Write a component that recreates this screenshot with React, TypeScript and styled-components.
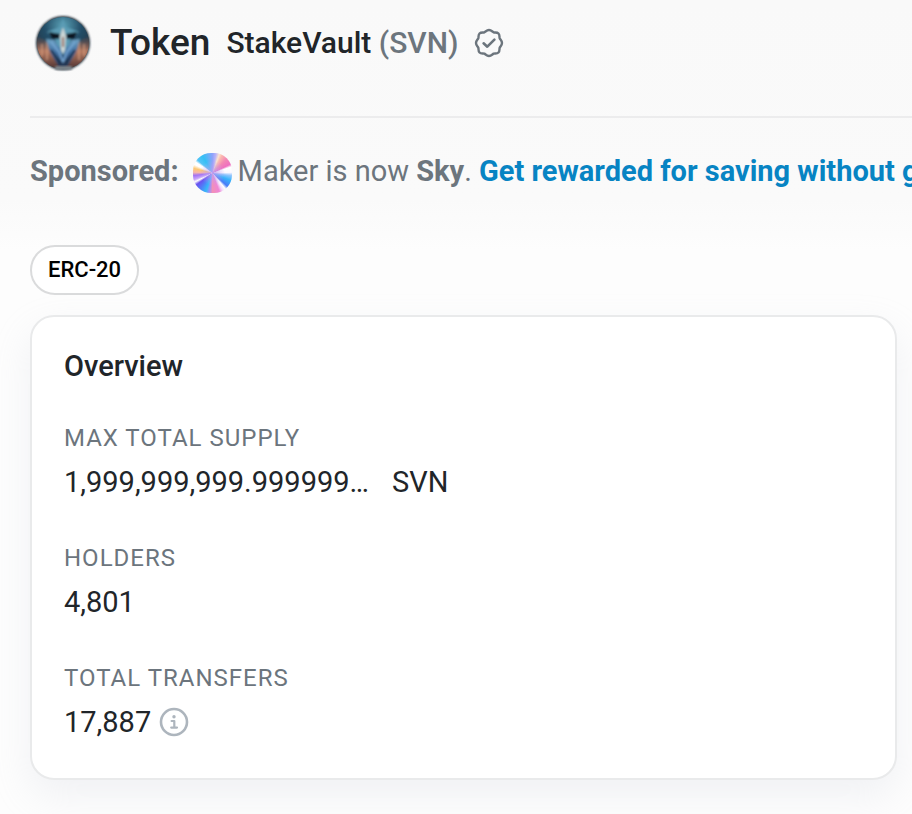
import React from 'react';
import styled, { createGlobalStyle } from 'styled-components';

const Global = createGlobalStyle`
  *, *::before, *::after { box-sizing: border-box; }
  body {
    margin: 0;
    overflow-x: hidden;
    background: #fdfdfd linear-gradient(#f9f9f9, #fafafa 200px, #fdfdfd 250px) no-repeat;
    color: #212529;
    font-family: Roboto, sans-serif;
    font-size: 29px;
    line-height: 44px;
  }
`;

const Page = styled.main`
  padding: 0 15px 34px 30px;
`;

const Header = styled.header`
  display: flex;
  align-items: center;
  height: 118px;
  padding: 0 0 30px 4px;
  margin-right: -15px;
  border-bottom: 2px solid #ececed;
  white-space: nowrap;
`;

const Title = styled.h1`
  display: flex;
  align-items: center;
  gap: 16px;
  margin: 0 16px 0 18px;
  font-size: 37px;
  font-weight: 500;
  line-height: 44px;
`;

const TokenName = styled.span`
  font-size: 30px;
`;

const Muted = styled.span`
  color: #6c757d;
`;

const Sponsored = styled.p`
  display: flex;
  align-items: center;
  margin: 31px -15px 0 0;
  overflow: hidden;
  color: #6c757d;
  white-space: pre;
`;

const SkyMark = styled.span`
  flex: none;
  width: 39px;
  height: 40px;
  margin: 4px 6px 0 14px;
  border-radius: 18px;
  background:
    radial-gradient(circle, rgba(190, 160, 240, 0.9) 0, rgba(190, 160, 240, 0) 45%),
    conic-gradient(
      #8fa4fb 0deg, #b9b2f8 10deg, #fbe3cf 20deg, #fbb9b0 28deg, #f386b4 45deg, #ef6fc0 64deg,
      #ffffff 72deg, #fbf7ff 88deg, #8fc4fd 98deg, #38b4fb 112deg, #4a7bf8 132deg,
      #ffffff 141deg, #f3dcfa 150deg, #ef86d4 160deg, #f291b8 180deg,
      #9b90fa 190deg, #36b8f8 200deg, #4b86f8 215deg, #6a51f0 234deg,
      #ffffff 243deg, #c9a6fa 250deg, #a373f5 262deg,
      #f7b7a8 272deg, #fcc873 284deg, #ffffff 295deg, #ffffff 303deg,
      #54c4f6 311deg, #34c0f5 330deg, #8fa4fb 360deg
    );
`;

const SponsorLink = styled.a`
  color: #0784c3;
  font-weight: 700;
  text-decoration: none;
`;

const Tag = styled.button`
  display: block;
  height: 50px;
  margin: 52px 0 20px;
  padding: 0 16px;
  border: 2px solid #dadbdc;
  border-radius: 25px;
  background: #fff;
  color: #000;
  font: 500 22px/44px Roboto, sans-serif;
`;

const Card = styled.section`
  padding: 28px 32px 34px;
  border: 2px solid #e9eaeb;
  border-radius: 24px;
  background: #fff;
  box-shadow: 0 16px 38px rgba(189, 197, 209, 0.2);
`;

const CardTitle = styled.h2`
  margin: 0 0 33px;
  font-size: 29px;
  font-weight: 500;
  line-height: 42px;
`;

const Stats = styled.dl`
  display: grid;
  gap: 36px;
  margin: 0;
`;

const Label = styled.dt`
  color: #6c757d;
  font-size: 24px;
  letter-spacing: 1px;
  line-height: 36px;
  text-transform: uppercase;
`;

const Value = styled.dd`
  display: flex;
  align-items: center;
  margin: 4px 0 0;
`;

const Unit = styled.span`
  margin-left: 23px;
`;

const InfoButton = styled.button`
  display: flex;
  margin: 0 0 0 8px;
  padding: 0;
  border: 0;
  background: none;
  color: #adb5bd;
`;

function TokenLogo() {
  return (
    <svg width="58" height="58" viewBox="0 0 58 58" role="img" aria-label="StakeVault">
      <defs>
        <radialGradient id="sky" cx="0.5" cy="0.2" r="0.75">
          <stop offset="0" stopColor="#5ba3b8" />
          <stop offset="0.4" stopColor="#25506a" />
          <stop offset="1" stopColor="#14222f" />
        </radialGradient>
        <linearGradient id="ember" x1="0" y1="0" x2="0" y2="1">
          <stop offset="0" stopColor="#6e4b45" stopOpacity="0" />
          <stop offset="0.45" stopColor="#b5785f" />
          <stop offset="1" stopColor="#3a2529" />
        </linearGradient>
        <linearGradient id="wing" x1="0" y1="0" x2="0" y2="1">
          <stop offset="0" stopColor="#6fa3c4" />
          <stop offset="0.5" stopColor="#3f6da0" />
          <stop offset="1" stopColor="#22344f" />
        </linearGradient>
        <clipPath id="disc"><circle cx="29" cy="29" r="26" /></clipPath>
        <filter id="soft"><feGaussianBlur stdDeviation="0.9" /></filter>
      </defs>
      <circle cx="29" cy="29" r="27" fill="#26313b" filter="url(#soft)" />
      <g clipPath="url(#disc)">
        <g filter="url(#soft)">
          <rect width="58" height="58" fill="url(#sky)" />
          <path d="M0 20 L15 29 L27 50 V58 H0Z M58 20 L43 29 L31 50 V58 H58Z" fill="url(#ember)" />
          <path d="M8 30v12M13 28v18M50 30v12M45 28v18" stroke="#dfa888" strokeWidth="1.5" opacity="0.7" />
          <path d="M29 4 L32 13 L45 18 L38 22 L34 34 L29 41 L24 34 L20 22 L13 18 L26 13Z" fill="#5b9cb5" />
          <path d="M15 18 L26 20 L25 25 L18 25Z M43 18 L32 20 L33 25 L40 25Z" fill="#0d1720" />
          <path d="M29 13 L32 22 L31 36 L29 40 L27 36 L26 22Z" fill="#cbd6d5" />
          <path d="M29 23v10" stroke="#91604f" strokeWidth="1.8" />
          <path d="M12 25 L20 26 L26 34 L29 43 L32 34 L38 26 L46 25 L42 38 L33 53 H25 L16 38Z" fill="url(#wing)" />
          <path d="M17 28 L25 38 L29 48 M41 28 L33 38 L29 48" fill="none" stroke="#78a9d5" strokeWidth="1.6" />
          <path d="M17 36 L27 50 M41 36 L31 50" stroke="#192942" strokeWidth="2" />
        </g>
      </g>
      <rect x="21" y="52" width="17" height="4" rx="1" fill="#7b858c" filter="url(#soft)" />
    </svg>
  );
}

function VerifiedIcon() {
  return (
    <svg width="30" height="30" viewBox="0 0 30 30" fill="none" stroke="#6c757d" strokeWidth="2.4"
      strokeLinecap="round" strokeLinejoin="round" role="img" aria-label="Verified">
      <path d="M15 2 C17.3 2 18.4 3.7 19.7 4.3 C21 4.8 23 4 24.5 5.5 C26 7 25.2 9 25.7 10.3 C26.3 11.6 28 12.7 28 15 C28 17.3 26.3 18.4 25.7 19.7 C25.2 21 26 23 24.5 24.5 C23 26 21 25.2 19.7 25.7 C18.4 26.3 17.3 28 15 28 C12.7 28 11.6 26.3 10.3 25.7 C9 25.2 7 26 5.5 24.5 C4 23 4.8 21 4.3 19.7 C3.7 18.4 2 17.3 2 15 C2 12.7 3.7 11.6 4.3 10.3 C4.8 9 4 7 5.5 5.5 C7 4 9 4.8 10.3 4.3 C11.6 3.7 12.7 2 15 2Z" />
      <path d="M9.6 15.3 L13.3 18.7 L20.4 11.6" strokeWidth="2.6" />
    </svg>
  );
}

function InfoIcon() {
  return (
    <svg width="30" height="30" viewBox="0 0 30 30" fill="none" stroke="currentColor" strokeLinecap="round" strokeLinejoin="round">
      <circle cx="15" cy="15" r="13" strokeWidth="2.6" />
      <path d="M12.6 14 H15.3 V20.4 M12.2 20.6 H18" strokeWidth="2.2" />
      <circle cx="15" cy="9.7" r="1.7" fill="currentColor" stroke="none" />
    </svg>
  );
}

export default function App() {
  return (
    <>
      <Global />
      <Page>
        <Header>
          <TokenLogo />
          <Title>
            Token <TokenName>StakeVault <Muted>(SVN)</Muted></TokenName>
          </Title>
          <VerifiedIcon />
        </Header>
        <Sponsored>
          <b>Sponsored:</b>
          <SkyMark />
          Maker is now <b>Sky</b>. <SponsorLink href="#">Get rewarded for saving without giving</SponsorLink>
        </Sponsored>
        <Tag type="button">ERC-20</Tag>
        <Card>
          <CardTitle>Overview</CardTitle>
          <Stats>
            <div>
              <Label>Max Total Supply</Label>
              <Value>1,999,999,999.999999…<Unit>SVN</Unit></Value>
            </div>
            <div>
              <Label>Holders</Label>
              <Value>4,801</Value>
            </div>
            <div>
              <Label>Total Transfers</Label>
              <Value>
                17,887
                <InfoButton type="button" aria-label="About total transfers"><InfoIcon /></InfoButton>
              </Value>
            </div>
          </Stats>
        </Card>
      </Page>
    </>
  );
}
